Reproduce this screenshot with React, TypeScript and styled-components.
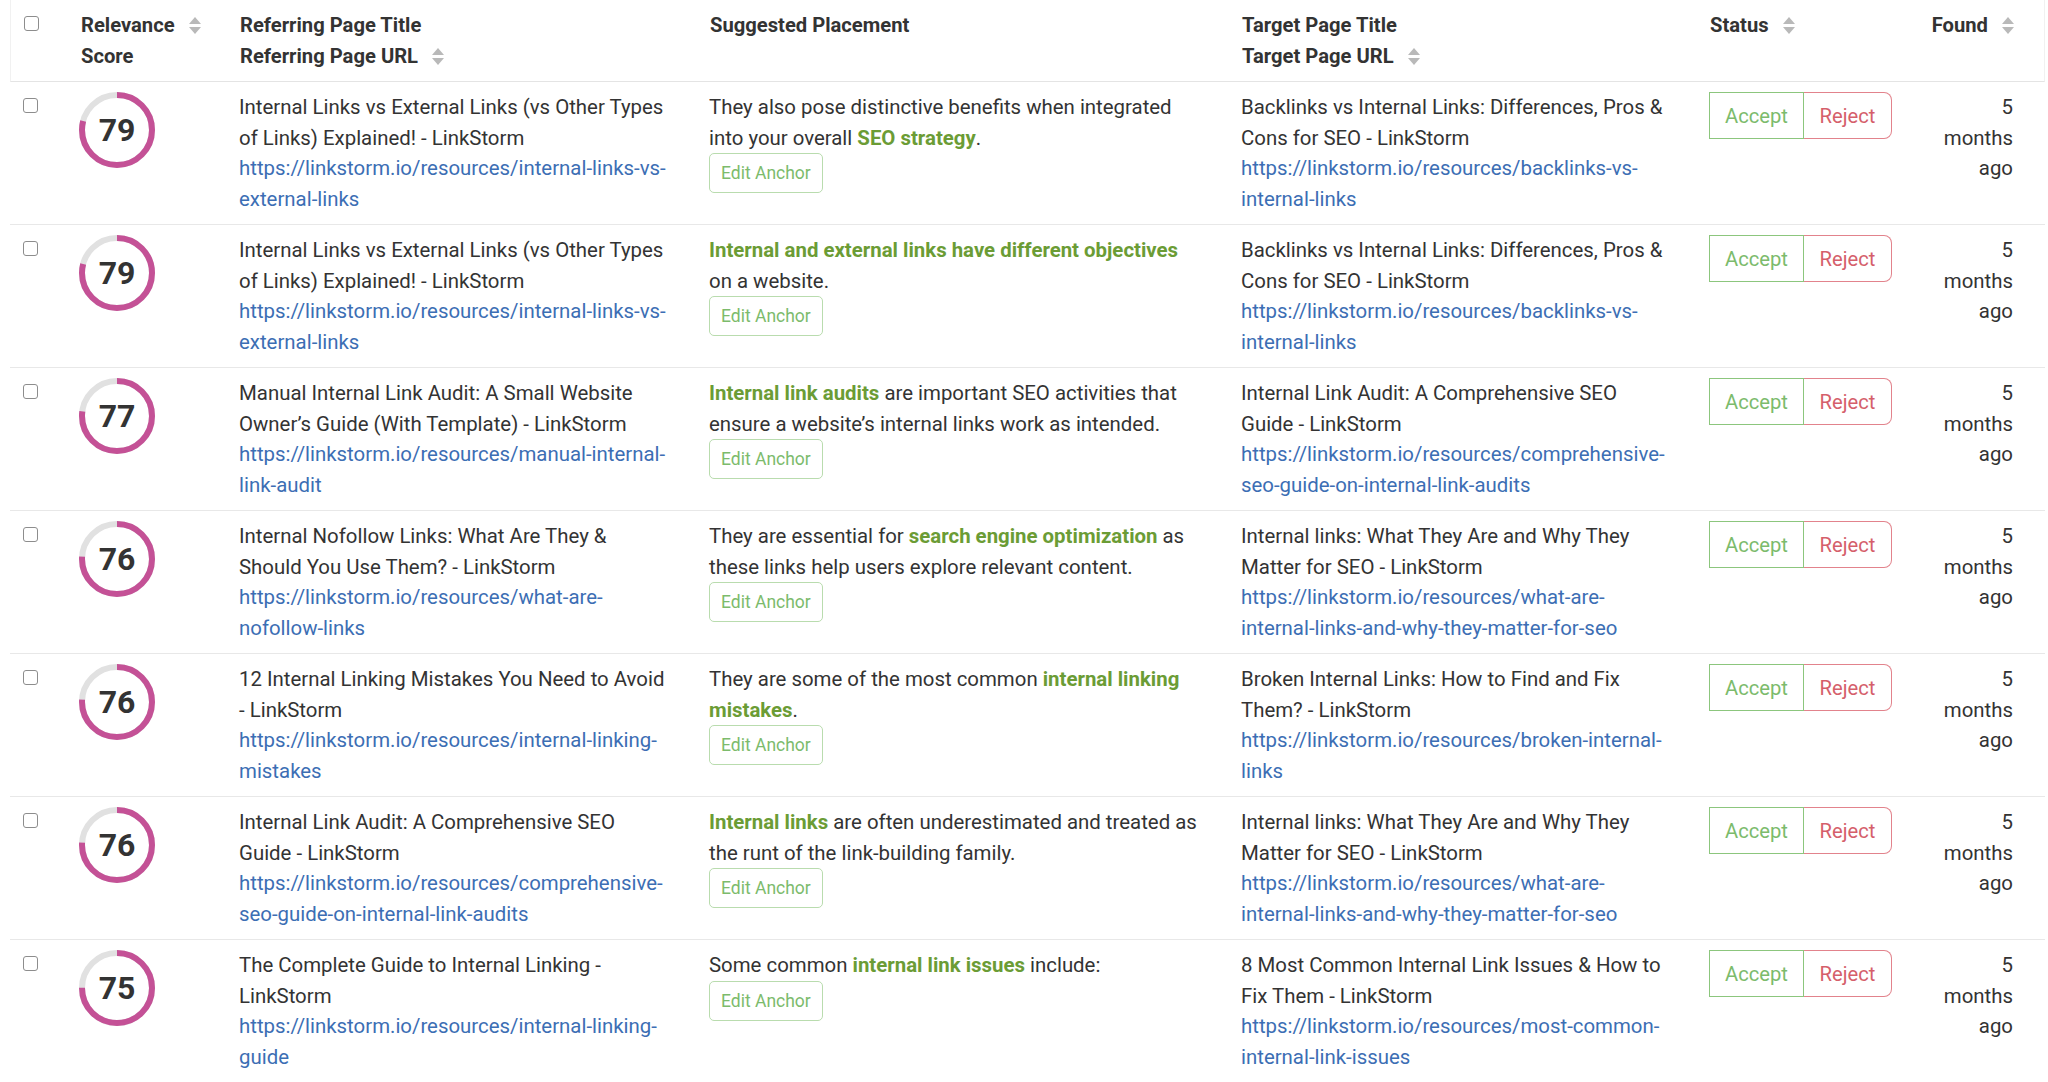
import React from "react";
import styled, { createGlobalStyle } from "styled-components";

const GlobalStyle = createGlobalStyle`
  html, body { margin: 0; padding: 0; background: #ffffff; }
  body { font-family: Roboto, "Liberation Sans", Arial, sans-serif; color: #333333; }
  * { box-sizing: border-box; }
`;

const COLS = "50px 159px 470px 532px 468px 240px 116px";

const Table = styled.div`
  margin-left: 10px;
  width: 2035px;
  font-family: Roboto, "Liberation Sans", Arial, sans-serif;
  font-size: 20.4px;
  color: #333333;
`;

const HeaderRow = styled.div`
  display: grid;
  grid-template-columns: ${COLS};
  border-bottom: 1px solid #e4e4e4;
  border-left: 1px solid #f1f1f1;
  border-right: 1px solid #f1f1f1;
  height: 82px;
`;

const Row = styled.div`
  display: grid;
  grid-template-columns: ${COLS};
  border-bottom: 1px solid #e8e8e8;
`;

const HeadCell = styled.div<{ $align?: "left" | "right"; $pl?: number; $pr?: number }>`
  padding: 10px ${(p) => p.$pr ?? 20}px 9px ${(p) => p.$pl ?? 20}px;
  font-weight: 700;
  font-size: 20.2px;
  line-height: 31px;
  color: #333333;
  display: flex;
  flex-direction: column;
  align-items: ${(p) => (p.$align === "right" ? "flex-end" : "flex-start")};
`;

const HeadLine = styled.div<{ $nowrap?: boolean }>`
  display: flex;
  align-items: flex-start;
  white-space: ${(p) => (p.$nowrap ? "nowrap" : "normal")};
`;

const HeadLabel = styled.span`
  flex: 0 1 auto;
`;

const SortWrap = styled.span`
  flex: 0 0 auto;
  display: inline-flex;
  margin-left: 14px;
  margin-top: 7px;
  width: 12px;
  height: 17px;
`;

const Cell = styled.div<{ $pl?: number; $pr?: number; $align?: "left" | "right" }>`
  padding: 10px ${(p) => p.$pr ?? 20}px 10px ${(p) => p.$pl ?? 20}px;
  line-height: 30.5px;
  text-align: ${(p) => p.$align ?? "left"};
  min-width: 0;
`;

const Check = styled.input.attrs({ type: "checkbox" })`
  appearance: none;
  -webkit-appearance: none;
  display: block;
  width: 15px;
  height: 15px;
  margin: 6px 0 0 3px;
  border: 1px solid #8d8d8d;
  border-radius: 3px;
  background: #fff;
`;

const ScoreBox = styled.div`
  position: relative;
  width: 76px;
  height: 76px;
  margin-left: -1px;
`;

const ScoreNum = styled.span`
  position: absolute;
  inset: 0;
  display: flex;
  align-items: center;
  justify-content: center;
  font-size: 32px;
  font-weight: 700;
  color: #333333;
  line-height: 1;
`;

const Title = styled.div`
  color: #333333;
`;

const Url = styled.a`
  display: block;
  color: #3c6eb4;
  text-decoration: none;
`;

const Anchor = styled.strong`
  color: #6b9c35;
  font-weight: 700;
`;

const EditButton = styled.button`
  display: block;
  height: 40px;
  padding: 0 11px;
  margin-top: 0;
  border: 1px solid #b9dcae;
  border-radius: 5px;
  background: #ffffff;
  color: #7cbb6c;
  font-family: Roboto, "Liberation Sans", Arial, sans-serif;
  font-size: 17.5px;
  line-height: 38px;
`;

const BtnGroup = styled.div`
  display: flex;
`;

const StatusBtn = styled.button<{ $kind: "accept" | "reject" }>`
  height: 47px;
  padding: 0;
  background: #ffffff;
  font-family: Roboto, "Liberation Sans", Arial, sans-serif;
  font-size: 20.2px;
  border: 1px solid ${(p) => (p.$kind === "accept" ? "#8cc67d" : "#e2838c")};
  border-left-width: ${(p) => (p.$kind === "accept" ? "1px" : "0")};
  color: ${(p) => (p.$kind === "accept" ? "#7cbb6c" : "#d55f6b")};
  border-radius: ${(p) => (p.$kind === "accept" ? "0" : "0 8px 8px 0")};
  width: ${(p) => (p.$kind === "accept" ? "95px" : "88px")};
`;

const SortIcon = () => (
  <SortWrap>
    <svg width="12" height="17" viewBox="0 0 12 17">
      <polygon points="6,0 12,7 0,7" fill="#b9b9b9" />
      <polygon points="0,10 12,10 6,17" fill="#b9b9b9" />
    </svg>
  </SortWrap>
);

const ScoreRing = ({ value }: { value: number }) => {
  const r = 35;
  const c = 2 * Math.PI * r;
  return (
    <ScoreBox>
      <svg width="76" height="76" viewBox="0 0 76 76">
        <circle cx="38" cy="38" r={r} fill="none" stroke="#e1e1e1" strokeWidth="6" />
        <circle
          cx="38"
          cy="38"
          r={r}
          fill="none"
          stroke="#c45196"
          strokeWidth="6"
          strokeDasharray={`${(c * value) / 100} ${c}`}
          transform="rotate(-90 38 38)"
        />
      </svg>
      <ScoreNum>{value}</ScoreNum>
    </ScoreBox>
  );
};

type Item = {
  score: number;
  refTitle: string;
  refUrl: string;
  before: string;
  anchor: string;
  after: string;
  tTitle: string;
  tUrl: string;
};

const base = "https://linkstorm.io/resources/";

const items: Item[] = [
  {
    score: 79,
    refTitle: "Internal Links vs External Links (vs Other Types of Links) Explained! - LinkStorm",
    refUrl: base + "internal-links-vs-external-links",
    before: "They also pose distinctive benefits when integrated into your overall ",
    anchor: "SEO strategy",
    after: ".",
    tTitle: "Backlinks vs Internal Links: Differences, Pros & Cons for SEO - LinkStorm",
    tUrl: base + "backlinks-vs-internal-links",
  },
  {
    score: 79,
    refTitle: "Internal Links vs External Links (vs Other Types of Links) Explained! - LinkStorm",
    refUrl: base + "internal-links-vs-external-links",
    before: "",
    anchor: "Internal and external links have different objectives",
    after: " on a website.",
    tTitle: "Backlinks vs Internal Links: Differences, Pros & Cons for SEO - LinkStorm",
    tUrl: base + "backlinks-vs-internal-links",
  },
  {
    score: 77,
    refTitle: "Manual Internal Link Audit: A Small Website Owner\u2019s Guide (With Template) - LinkStorm",
    refUrl: base + "manual-internal-link-audit",
    before: "",
    anchor: "Internal link audits",
    after: " are important SEO activities that ensure a website\u2019s internal links work as intended.",
    tTitle: "Internal Link Audit: A Comprehensive SEO Guide - LinkStorm",
    tUrl: base + "comprehensive-seo-guide-on-internal-link-audits",
  },
  {
    score: 76,
    refTitle: "Internal Nofollow Links: What Are They & Should You Use Them? - LinkStorm",
    refUrl: base + "what-are-nofollow-links",
    before: "They are essential for ",
    anchor: "search engine optimization",
    after: " as these links help users explore relevant content.",
    tTitle: "Internal links: What They Are and Why They Matter for SEO - LinkStorm",
    tUrl: base + "what-are-internal-links-and-why-they-matter-for-seo",
  },
  {
    score: 76,
    refTitle: "12 Internal Linking Mistakes You Need to Avoid - LinkStorm",
    refUrl: base + "internal-linking-mistakes",
    before: "They are some of the most common ",
    anchor: "internal linking mistakes",
    after: ".",
    tTitle: "Broken Internal Links: How to Find and Fix Them? - LinkStorm",
    tUrl: base + "broken-internal-links",
  },
  {
    score: 76,
    refTitle: "Internal Link Audit: A Comprehensive SEO Guide - LinkStorm",
    refUrl: base + "comprehensive-seo-guide-on-internal-link-audits",
    before: "",
    anchor: "Internal links",
    after: " are often underestimated and treated as the runt of the link-building family.",
    tTitle: "Internal links: What They Are and Why They Matter for SEO - LinkStorm",
    tUrl: base + "what-are-internal-links-and-why-they-matter-for-seo",
  },
  {
    score: 75,
    refTitle: "The Complete Guide to Internal Linking - LinkStorm",
    refUrl: base + "internal-linking-guide",
    before: "Some common ",
    anchor: "internal link issues",
    after: " include:",
    tTitle: "8 Most Common Internal Link Issues & How to Fix Them - LinkStorm",
    tUrl: base + "most-common-internal-link-issues",
  },
];

export default function App() {
  return (
    <>
      <GlobalStyle />
      <Table>
        <HeaderRow>
          <HeadCell $pl={10} $pr={0}>
            <Check aria-label="Select all" />
          </HeadCell>
          <HeadCell>
            <HeadLine>
              <HeadLabel>Relevance Score</HeadLabel>
              <SortIcon />
            </HeadLine>
          </HeadCell>
          <HeadCell>
            <HeadLine>Referring Page Title</HeadLine>
            <HeadLine>
              <HeadLabel>Referring Page URL</HeadLabel>
              <SortIcon />
            </HeadLine>
          </HeadCell>
          <HeadCell>
            <HeadLine>Suggested Placement</HeadLine>
          </HeadCell>
          <HeadCell>
            <HeadLine>Target Page Title</HeadLine>
            <HeadLine>
              <HeadLabel>Target Page URL</HeadLabel>
              <SortIcon />
            </HeadLine>
          </HeadCell>
          <HeadCell>
            <HeadLine $nowrap>
              <HeadLabel>Status</HeadLabel>
              <SortIcon />
            </HeadLine>
          </HeadCell>
          <HeadCell $align="right" $pl={0} $pr={32}>
            <HeadLine $nowrap>
              <HeadLabel>Found</HeadLabel>
              <SortIcon />
            </HeadLine>
          </HeadCell>
        </HeaderRow>
        {items.map((it, i) => (
          <Row key={i}>
            <Cell $pl={10} $pr={0}>
              <Check aria-label="Select row" />
            </Cell>
            <Cell>
              <ScoreRing value={it.score} />
            </Cell>
            <Cell>
              <Title>{it.refTitle}</Title>
              <Url href="#">{it.refUrl}</Url>
            </Cell>
            <Cell>
              <div>
                {it.before}
                <Anchor>{it.anchor}</Anchor>
                {it.after}
              </div>
              <EditButton>Edit Anchor</EditButton>
            </Cell>
            <Cell>
              <Title>{it.tTitle}</Title>
              <Url href="#">{it.tUrl}</Url>
            </Cell>
            <Cell>
              <BtnGroup>
                <StatusBtn $kind="accept">Accept</StatusBtn>
                <StatusBtn $kind="reject">Reject</StatusBtn>
              </BtnGroup>
            </Cell>
            <Cell $align="right" $pl={4} $pr={32}>
              5 months ago
            </Cell>
          </Row>
        ))}
      </Table>
    </>
  );
}
